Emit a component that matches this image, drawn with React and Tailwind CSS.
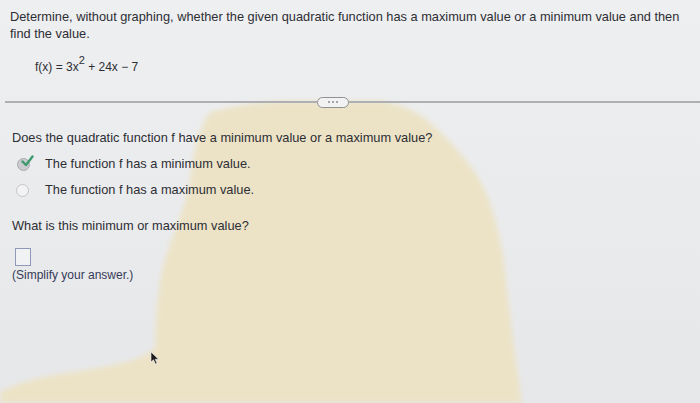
export default function App() {
  return (
    <div className="relative w-[700px] h-[403px] overflow-hidden bg-[#eaebed] font-['Liberation_Sans',Arial,sans-serif] text-[#2d2e34]">
      {/* glare from the photo */}
      <svg className="absolute inset-0" width="700" height="403" viewBox="0 0 700 403">
        <defs>
          <linearGradient id="bg" x1="0" y1="0" x2="0" y2="1">
            <stop offset="0" stopColor="#eeeff0" />
            <stop offset="1" stopColor="#e6e7e9" />
          </linearGradient>
          <filter id="soft">
            <feGaussianBlur stdDeviation="2.5" />
          </filter>
        </defs>
        <rect width="700" height="403" fill="url(#bg)" />
        <path
          d="M210 112 C240 104 270 101 300 101 L380 101 C400 104 415 110 427 120 C450 140 465 158 475 172 C490 195 500 230 505 270 C510 320 516 360 522 403 L0 403 L0 392 C15 384 35 378 60 374 C110 366 140 362 155 348 C155 320 157 295 163 267 C170 240 185 210 190 180 C193 155 197 130 210 112 Z"
          fill="#ece3c7"
          filter="url(#soft)"
        />
      </svg>

      <div className="relative pl-[10px] pt-[8px]">
        <p className="text-[12.8px] leading-[17px] pr-[10px]">
          Determine, without graphing, whether the given quadratic function has a maximum value or a minimum value and then find the value.
        </p>

        <p className="mt-[17px] pl-[25px] text-[12px] leading-[16px]">
          f(x) = 3x<sup className="-top-[7px] text-[11px]">2</sup> + 24x − 7
        </p>

        <div className="mt-[21px] -ml-[5px] flex items-center h-[12px]">
          <div className="h-[2px] w-[312px] bg-[#aeafb3]" />
          <div className="flex items-center justify-center gap-[2px] h-[11px] w-[32px] rounded-full border-[1.5px] border-[#8f9095] bg-[#f2f2f3]">
            <span className="w-[2px] h-[2px] bg-[#8a8b90] rounded-full" />
            <span className="w-[2px] h-[2px] bg-[#8a8b90] rounded-full" />
            <span className="w-[2px] h-[2px] bg-[#8a8b90] rounded-full" />
          </div>
          <div className="h-[2px] flex-1 bg-[#aeafb3]" />
        </div>

        <p className="mt-[21px] pl-[2px] text-[12.8px] leading-[17px]">
          Does the quadratic function f have a minimum value or a maximum value?
        </p>

        <div className="mt-[5px]">
          <div className="flex items-center h-[26px]">
            <span className="relative ml-[7px] w-[13px] h-[13px] rounded-full bg-[#c9cbce] border border-[#a9abaf]">
              <svg className="absolute -top-[4px] left-[3px]" width="13" height="12" viewBox="0 0 13 12">
                <path d="M1.5 6.5 L5 10 L11.5 1.5" fill="none" stroke="#3c9a6c" strokeWidth="2.4" strokeLinecap="round" strokeLinejoin="round" />
              </svg>
            </span>
            <span className="ml-[15px] text-[12.8px]">The function f has a minimum value.</span>
          </div>
          <div className="flex items-center h-[26px]">
            <span className="ml-[6px] w-[13px] h-[13px] rounded-full bg-[#f3f3f4] border border-[#c3c5c9]" />
            <span className="ml-[16px] text-[12.8px]">The function f has a maximum value.</span>
          </div>
        </div>

        <p className="mt-[13.5px] pl-[2px] text-[12.8px] leading-[17px]">What is this minimum or maximum value?</p>

        <div className="mt-[14px] ml-[5px] w-[16px] h-[18px] border-[1.5px] border-[#8f98b8] bg-[#f1f2f4]" />

        <p className="mt-[2px] pl-[2px] text-[12px] leading-[15px] text-[#363a58]">(Simplify your answer.)</p>
      </div>

      {/* mouse pointer */}
      <svg className="absolute left-[150px] top-[351px]" width="10" height="14" viewBox="0 0 10 14">
        <path d="M1 1 L1 11 L3.5 8.8 L5.5 13 L7 12.3 L5.2 8.3 L8.5 8.3 Z" fill="#1c1c20" stroke="#f0f0f0" strokeWidth="0.6" />
      </svg>
    </div>
  )
}
